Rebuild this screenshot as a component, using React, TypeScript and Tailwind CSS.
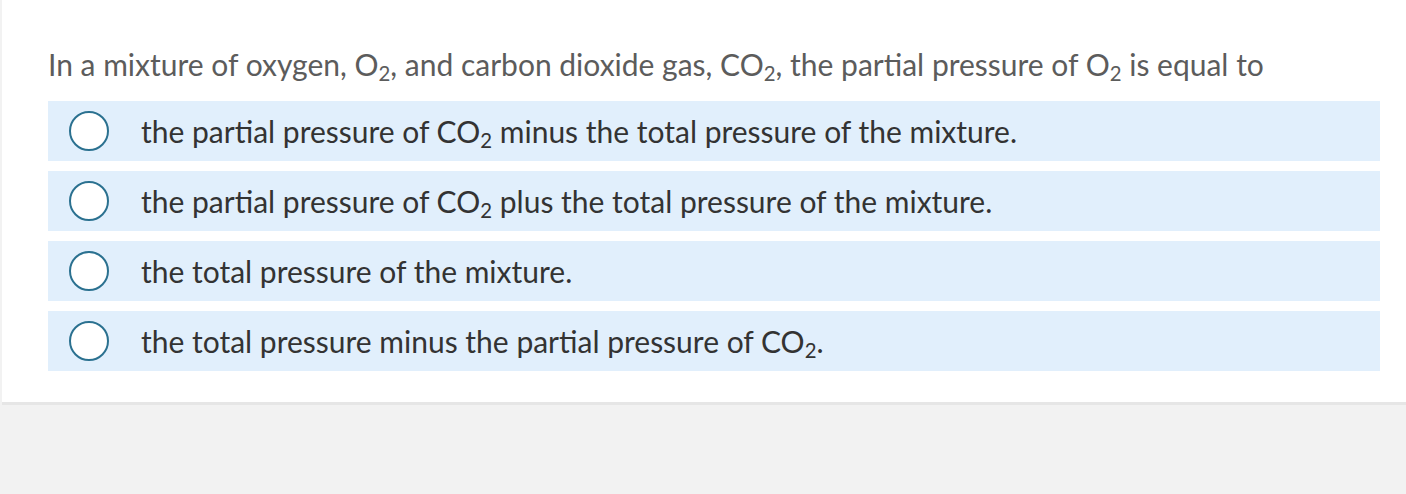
const Sub = () => <sub className="text-[0.68em]">2</sub>;

const options = [
  <>the partial pressure of CO<Sub /> minus the total pressure of the mixture.</>,
  <>the partial pressure of CO<Sub /> plus the total pressure of the mixture.</>,
  <>the total pressure of the mixture.</>,
  <>the total pressure minus the partial pressure of CO<Sub />.</>,
];

export default function App() {
  return (
    <div className="min-h-[494px] bg-[#f2f2f2] font-['Lato','Liberation_Sans',sans-serif]">
      <div className="ml-[2px] bg-white pt-[44px] pb-[31px] border-b-[3px] border-[#e6e6e6]">
        <p className="pl-[46px] text-[30px] leading-[40px] text-[#5c5c5c]">
          In a mixture of oxygen, O<Sub />, and carbon dioxide gas, CO<Sub />, the partial pressure of O<Sub /> is equal to
        </p>
        <div className="mt-[17px] ml-[46px] mr-[26px] flex flex-col gap-[10px]">
          {options.map((o, i) => (
            <label key={i} className="flex h-[60px] items-center bg-[#e1effc] pl-[21px]">
              <span className="h-[40px] w-[40px] shrink-0 rounded-full border-2 border-[#2b7190] bg-white" />
              <span className="ml-[32px] text-[30px] leading-[40px] text-[#333333]">{o}</span>
            </label>
          ))}
        </div>
      </div>
    </div>
  );
}
